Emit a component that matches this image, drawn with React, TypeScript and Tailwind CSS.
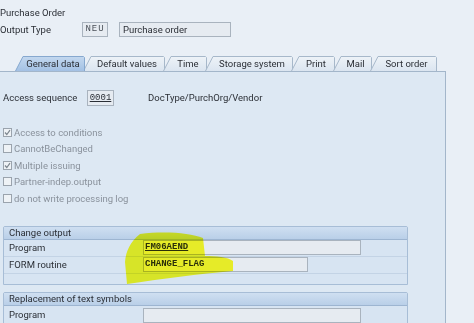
import React from 'react';

const tabs = [
  { label: 'General data', w: 70, active: true },
  { label: 'Default values', w: 82 },
  { label: 'Time', w: 44 },
  { label: 'Storage system', w: 88 },
  { label: 'Print', w: 44 },
  { label: 'Mail', w: 39 },
  { label: 'Sort order', w: 67 },
];

const checks = [
  { label: 'Access to conditions', on: true },
  { label: 'CannotBeChanged', on: false },
  { label: 'Multiple issuing', on: true },
  { label: 'Partner-indep.output', on: false },
  { label: 'do not write processing log', on: false },
];

const Tab = ({ label, w, active }: { label: string; w: number; active?: boolean }) => (
  <div className={`relative shrink-0 h-[15px] -ml-[2px] first:ml-0 flex items-center pl-[8px] pr-[2px] ${active ? 'z-10' : ''}`} style={{ width: w }}>
    <svg className="absolute inset-0" width={w} height={15} viewBox={`0 0 ${w} 15`} preserveAspectRatio="none">
      <defs>
        <linearGradient id={active ? 'tabA' : 'tabI'} x1="0" y1="0" x2="0" y2="1">
          <stop offset="0" stopColor={active ? '#c3d8ef' : '#eef3f8'} />
          <stop offset="1" stopColor={active ? '#a3c1e4' : '#dbe5f0'} />
        </linearGradient>
      </defs>
      <path
        d={`M0.5 15 L8 0.5 L${w - 1.5} 0.5 L${w - 0.5} 1.5 L${w - 0.5} 15`}
        fill={`url(#${active ? 'tabA' : 'tabI'})`}
        stroke={active ? '#86a8cf' : '#a7b8ca'}
        strokeWidth="1"
      />
    </svg>
    <span className="relative flex-1 text-center whitespace-nowrap leading-none text-[#2b2f36]">{label}</span>
  </div>
);

const Field = ({ w, children, className = '' }: { w: number; children?: React.ReactNode; className?: string }) => (
  <div
    className={`shrink-0 h-[15px] border border-[#a9b3be] bg-[#e6ebf1] flex items-center px-[3px] whitespace-nowrap ${className}`}
    style={{ width: w }}
  >
    {children}
  </div>
);

const App = () => {
  return (
    <div className="relative w-[474px] h-[323px] overflow-hidden bg-[#e9eff6] text-[#2b2f36] text-[9.5px] leading-none font-['Roboto','Liberation_Sans',Arial,sans-serif]">
      {/* header */}
      <div className="pt-[8px] h-[20px]">Purchase Order</div>
      <div className="flex items-center h-[15px] mt-[2px]">
        <span className="w-[82px] shrink-0">Output Type</span>
        <Field w={26} className="font-['Liberation_Mono',monospace] text-[9px] tracking-[1px] justify-center text-[#4a5058]">NEU</Field>
        <Field w={112} className="ml-[11px]">Purchase order</Field>
      </div>

      {/* tabs */}
      <div className="flex pl-[15px] mt-[19px]">
        {tabs.map((t) => (
          <Tab key={t.label} {...t} />
        ))}
      </div>

      {/* panel */}
      <div className="w-[446px] h-[260px] border-t border-r border-[#a3b6ca] bg-[#dde8f3]">
        <div className="flex items-center h-[16px] mt-[18px] pl-[3px] whitespace-nowrap">
          <span className="w-[84px] shrink-0">Access sequence</span>
          <div className="shrink-0 h-[16px] w-[27px] border border-[#a9b3be] bg-[#e6ebf1] flex items-center justify-center font-['Liberation_Mono',monospace] text-[9px] underline">
            0001
          </div>
          <span className="ml-[34px]">DocType/PurchOrg/Vendor</span>
        </div>

        <div className="mt-[18px] pl-[3px] flex flex-col text-[#8a929c]">
          {checks.map((c) => (
            <div key={c.label} className="flex items-center h-[16.5px] gap-[2px] whitespace-nowrap">
              <div className="w-[9px] h-[9px] border border-[#9aa3ad] bg-[#eef2f6] flex items-center justify-center">
                {c.on && (
                  <svg width="7" height="7" viewBox="0 0 7 7">
                    <path d="M1 3.5 L2.8 5.5 L6 1.2" fill="none" stroke="#7d868f" strokeWidth="1.2" />
                  </svg>
                )}
              </div>
              <span>{c.label}</span>
            </div>
          ))}
        </div>

        {/* Change output */}
        <div className="ml-[3px] mt-[19px] w-[405px] h-[59px] border border-[#a7bdd6] rounded-t-[2px] bg-[#d7e4f2]">
          <div className="h-[13px] bg-gradient-to-b from-[#cfdff1] to-[#b9cfe8] border-b border-[#9db5d1] flex items-center pl-[5px]">
            Change output
          </div>
          <div className="flex items-center h-[17px] pl-[5px] border-b border-[#c3d3e5]">
            <span className="w-[134px] shrink-0">Program</span>
            <Field w={218} className="h-[14px] pl-[1px] font-['Liberation_Mono',monospace] text-[9px] font-bold underline">FM06AEND</Field>
          </div>
          <div className="flex items-center h-[17px] pl-[5px] border-b border-[#c3d3e5]">
            <span className="w-[134px] shrink-0">FORM routine</span>
            <Field w={165} className="h-[14px] pl-[1px] font-['Liberation_Mono',monospace] text-[9px] font-bold">CHANGE_FLAG</Field>
          </div>
        </div>

        {/* Replacement of text symbols */}
        <div className="ml-[3px] mt-[7px] w-[405px] h-[40px] border border-[#a7bdd6] rounded-t-[2px] bg-[#d7e4f2]">
          <div className="h-[13px] bg-gradient-to-b from-[#cfdff1] to-[#b9cfe8] border-b border-[#9db5d1] flex items-center pl-[5px]">
            Replacement of text symbols
          </div>
          <div className="flex items-center h-[19px] pl-[5px]">
            <span className="w-[134px] shrink-0">Program</span>
            <Field w={218} />
          </div>
        </div>
      </div>

      {/* highlighter mark */}
      <svg className="absolute left-0 top-0 mix-blend-multiply pointer-events-none" width="474" height="323" viewBox="0 0 474 323">
        <path
          d="M140 234 C165 231 190 233 203 238 L205 256 C216 256 228 257 233 261 L233 271 C200 274 160 279 127 284 L125 262 C126 251 130 242 140 234 Z"
          fill="#ffff2a"
        />
      </svg>
    </div>
  );
};

export default App;
